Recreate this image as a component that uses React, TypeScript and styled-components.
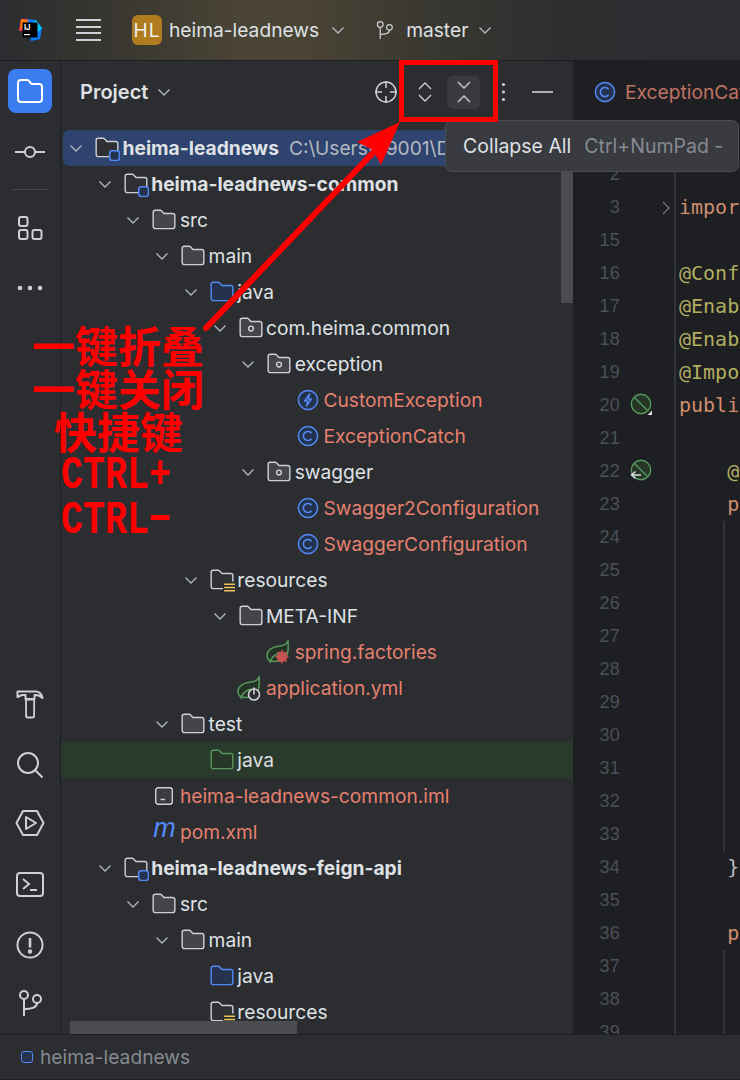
import React from "react";
import styled, { createGlobalStyle } from "styled-components";

const Global = createGlobalStyle`
  html, body { margin: 0; padding: 0; background: #2b2d30; }
  body { font-family: Inter, "Noto Sans", sans-serif; overflow: hidden; }
  #root { width: 740px; height: 1080px; }
`;

const Page = styled.div`
  position: relative; width: 740px; height: 1080px; overflow: hidden;
  display: flex; flex-direction: column; background: #2b2d30; color: #dfe1e5;
`;
const Header = styled.header`
  height: 60px; flex: none; display: flex; align-items: center; padding-left: 18px;
  border-bottom: 1px solid #1e1f22;
  background: linear-gradient(90deg, #2b2d30 0px, #35342f 90px, #4b4536 250px, #4a4435 300px, #3a3831 420px, #2d2e30 560px, #2b2d30 740px);
`;
const Logo = styled.div`
  width: 24px; height: 24px; flex: none; display: flex;
`;
const Burger = styled.div`
  margin-left: 34px; width: 25px; height: 24px; flex: none;
  display: flex; flex-direction: column; justify-content: space-between; padding: 1px 0; box-sizing: border-box;
  span { display: block; height: 2px; background: #ced0d6; }
`;
const Badge = styled.div`
  margin-left: 31px; width: 30px; height: 30px; border-radius: 6px; background: #ae7c1e; flex: none;
  display: flex; align-items: center; justify-content: center; color: #f2f2f0; font-size: 19px; letter-spacing: 1px;
`;
const HeadLabel = styled.span<{ $gap: number }>`
  margin-left: ${p => p.$gap}px; font-size: 19.2px; color: #dfe1e5; white-space: nowrap;
`;
const HeadChevron = styled.div<{ $gap: number }>`
  margin-left: ${p => p.$gap}px; display: flex; flex: none;
`;
const Main = styled.div`
  flex: 1; min-height: 0; display: flex;
`;
const Stripe = styled.aside`
  width: 60px; flex: none; border-right: 1px solid #1e1f22; display: flex; flex-direction: column;
  align-items: center; padding-top: 8px; box-sizing: content-box;
`;
const StripeActive = styled.div`
  width: 44px; height: 44px; border-radius: 8px; background: #3b7df0; display: flex; align-items: center; justify-content: center;
`;
const StripeIcon = styled.div<{ $top: number }>`
  margin-top: ${p => p.$top}px; display: flex; flex: none;
`;
const StripeRule = styled.div`
  width: 36px; height: 1px; background: #43454a; margin-top: 29px; flex: none;
`;
const StripeSpacer = styled.div`flex: 1;`;
const StripeFoot = styled.div`height: 18px; flex: none;`;
const Panel = styled.section`
  width: 512px; flex: none; position: relative; overflow: hidden; display: flex; flex-direction: column;
`;
const PanelHead = styled.div`
  height: 69px; flex: none; box-sizing: border-box; padding: 0 15px 7px 19px; display: flex; align-items: center;
`;
const PanelTitle = styled.span`
  font-size: 20px; font-weight: 600; color: #dfe1e5;
`;
const PanelIcon = styled.div<{ $left: number; $active?: boolean }>`
  margin-left: ${p => p.$left}px; width: 33px; height: 33px; flex: none; border-radius: 6px;
  display: flex; align-items: center; justify-content: center;
  background: ${p => (p.$active ? "#393b40" : "transparent")};
`;
const Tree = styled.div`
  display: flex; flex-direction: column;
`;
const Row = styled.div<{ $level: number; $tone?: string }>`
  height: 36px; flex: none; display: flex; align-items: center; white-space: nowrap; overflow: hidden;
  padding-left: ${p => 6 + p.$level * 28.7}px;
  ${p => p.$tone === "selected" ? "background:#2e436e;border-radius:6px;margin-left:2px;padding-left:4px;" : ""}
  ${p => p.$tone === "green" ? "background:#2a3a2c;" : ""}
`;
const ChevronSlot = styled.div`
  width: 29px; flex: none; display: flex; padding-left: 1px; box-sizing: border-box;
`;
const IconSlot = styled.div`
  width: 22px; height: 22px; flex: none; display: flex; align-items: center; justify-content: center; margin-right: 4.5px; position: relative;
  svg { flex: none; }
`;
const Label = styled.span<{ $red?: boolean; $bold?: boolean }>`
  font-size: 19.2px; font-weight: ${p => (p.$bold ? 700 : 400)};
  color: ${p => (p.$red ? "#e5806f" : "#dfe1e5")};
`;
const Hint = styled.span`
  font-size: 19.2px; color: #b5b9c0; margin-left: 10px;
`;
const Maven = styled.span`
  font: italic 400 27px "Liberation Sans", sans-serif; color: #548af7; line-height: 1; margin-top: -7px;
`;
const VScroll = styled.div`
  position: absolute; right: 0; top: 104px; width: 12px; height: 138px; background: #4a4c50;
`;
const HScroll = styled.div`
  position: absolute; left: 9px; bottom: 0; width: 227px; height: 13px; background: #4a4c50;
`;
const Editor = styled.section`
  flex: 1; min-width: 0; background: #1e1f22; display: flex; flex-direction: column; overflow: hidden;
`;
const TabBar = styled.div`
  height: 63.5px; flex: none; display: flex; align-items: flex-start; padding: 20px 0 0 21px; box-sizing: border-box;
  svg { flex: none; }
`;
const TabLabel = styled.span`
  margin-left: 9px; font-size: 19.2px; color: #c07264; white-space: nowrap; line-height: 22px; flex: none;
`;
const CodeArea = styled.div`
  flex: 1; min-height: 0; overflow: hidden; display: flex; flex-direction: column;
`;
const Line = styled.div`
  height: 33px; flex: none; display: flex; align-items: stretch;
`;
const Num = styled.div`
  width: 47px; flex: none; text-align: right; font: 18px/33px "Liberation Sans", sans-serif; letter-spacing: 0.2px; color: #4b5059;
`;
const Gutter = styled.div`
  width: 54px; flex: none; display: flex; align-items: center; position: relative; padding-left: 10px; box-sizing: border-box;
`;
const GutterFold = styled.div`
  position: absolute; right: 3px; top: 9px; display: flex;
`;
const GutterRule = styled.div`
  width: 2px; flex: none; background: #313438;
`;
const Code = styled.div<{ $guide?: boolean }>`
  flex: 1; min-width: 0; white-space: pre; overflow: hidden; padding-left: 3px;
  font: 20px/33px "DejaVu Sans Mono", "Liberation Mono", monospace;
  color: #bcbec4;
  ${p => p.$guide ? "background: linear-gradient(#313438,#313438) no-repeat 47px 0 / 2px 100%;" : ""}
`;
const Kw = styled.span`color: #cf8e6d;`;
const Ann = styled.span`color: #b3ae60;`;
const Status = styled.footer`
  height: 46px; flex: none; box-sizing: border-box; border-top: 1px solid #1e1f22; border-bottom: 1px solid #1e1f22;
  display: flex; align-items: center; padding-left: 21px; gap: 7px; font-size: 19.2px; color: #868a91; background: #2b2d30;
`;
const StatusDot = styled.span`
  width: 10px; height: 10px; border: 1.5px solid #548af7; border-radius: 3px; flex: none; background: #25324d;
`;
const Tooltip = styled.div`
  position: absolute; left: 445px; top: 120px; width: 294px; height: 52px; box-sizing: border-box;
  background: #393b40; border: 1.5px solid #4a4c51; border-radius: 7px;
  display: flex; align-items: center; padding: 0 0 0 17px; white-space: nowrap; font-size: 19.5px; color: #dfe1e5;
`;
const TooltipKey = styled.span`
  margin-left: 13px; color: #868a91; font-size: 19.5px;
`;
const RedBox = styled.div`
  position: absolute; left: 399px; top: 60px; width: 99px; height: 62px; box-sizing: border-box; border: 5px solid #ff0000;
`;
const Arrow = styled.svg`
  position: absolute; left: 0; top: 0; pointer-events: none;
`;
const Note = styled.div`
  position: absolute; left: 0; top: 323px; display: flex; flex-direction: column; color: #ff0000;
`;
const NoteCjk = styled.div<{ $left: number }>`
  padding-left: ${p => p.$left}px; height: 43px; font: 700 43px/43px "Noto Sans CJK SC", "Liberation Sans", sans-serif; white-space: nowrap;
`;
const NoteLatin = styled.div`
  padding-left: 61px; height: 44px; margin-top: 1px; font: 700 36.7px/44px "Liberation Mono", monospace; white-space: nowrap;
  transform: scaleY(1.25); transform-origin: 0 50%;
`;

const stroke = "#ced0d6";

type FK = "plain" | "blue" | "green" | "module" | "package" | "resources";

const Chevron = ({ c = "#b4b8bf", s = 16 }: { c?: string; s?: number }) => (
  <svg width={s} height={s} viewBox="0 0 16 16" fill="none"><path d="M2.5 5.5 8 11l5.5-5.5" stroke={c} strokeWidth="1.3" /></svg>
);

const Folder = ({ kind }: { kind: FK }) => {
  const fill = kind === "blue" ? "#25324d" : kind === "green" ? "#253627" : kind === "module" || kind === "resources" ? "#2f3135" : "#43454a";
  const line = kind === "blue" ? "#548af7" : kind === "green" ? "#57965c" : "#ced0d6";
  return (
    <svg width="26" height="26" viewBox="0 0 24 24" fill="none">
      <path d="M2 5a2 2 0 0 1 2-2h4.500a1.500 1.500 0 0 1 1.100.5L12 6h8a2 2 0 0 1 2 2v10a2 2 0 0 1-2 2H4a2 2 0 0 1-2-2z" fill={fill} stroke={line} strokeWidth="1.300" />
      {kind === "package" && <circle cx="12" cy="12.500" r="2.200" stroke={line} strokeWidth="1.300" />}
      {kind === "module" && <rect x="14.500" y="14.500" width="9" height="9" rx="2.400" fill="#25324d" stroke="#548af7" strokeWidth="1.400" />}
      {kind === "resources" && (
        <g>
          <rect x="13" y="13.500" width="11" height="10" fill="#2b2d30" />
          <path d="M14 16h10M14 19h10M14 22h10" stroke="#f2c55c" strokeWidth="1.400" />
        </g>
      )}
    </svg>
  );
};

const ClassIcon = ({ bolt }: { bolt?: boolean }) => (
  <svg width="22" height="22" viewBox="0 0 22 22" fill="none">
    <circle cx="11" cy="11" r="9.600" fill="#25324d" stroke="#548af7" strokeWidth="1.500" />
    {bolt
      ? <path d="M12.600 5 7.600 12h3.200l-1.400 5 5-7h-3.200z" stroke="#548af7" strokeWidth="1.400" strokeLinejoin="round" />
      : <path d="M14.600 8.200A4.600 4.600 0 1 0 14.600 13.800" stroke="#548af7" strokeWidth="1.500" />}
  </svg>
);

const Leaf = ({ badge }: { badge: "star" | "power" }) => (
  <svg width="27" height="27" viewBox="0 0 27 27" fill="none" style={{ marginLeft: -2 }}>
    <path d="M23 1.500c-.5 3.500-3 5-8 5.500C8 7.800 2 11 2 16.500 2 20.500 5 22.500 9.500 22.500c5 0 10.500-1 12.500-6.500 1-3 1.500-9 1-14.500z" fill="#233326" stroke="#57965c" strokeWidth="1.600" strokeLinejoin="round" />
    <path d="M5 24c.5-5 4.500-8.500 10-10" stroke="#57965c" strokeWidth="1.500" />
    {badge === "star"
      ? <path d="M17 10.500l1.800 3 3.200-1-.7 3.300 2.700 2-2.700 2 .7 3.300-3.200-1-1.800 3-1.800-3-3.200 1 .7-3.300-2.700-2 2.700-2-.7-3.300 3.200 1z" fill="#c75450" />
      : <g stroke="#ced0d6" strokeWidth="1.600"><circle cx="18" cy="19.500" r="5.500" fill="#2b2d30" /><path d="M18 12.500V19.500" /></g>}
  </svg>
);

const Iml = () => (
  <svg width="20" height="20" viewBox="0 0 20 20" fill="none">
    <rect x="1.700" y="1.700" width="16.600" height="16.600" rx="2.500" fill="#393b40" stroke="#ced0d6" strokeWidth="1.400" />
    <path d="M6.500 13.500h4.500" stroke="#ced0d6" strokeWidth="1.500" />
  </svg>
);

const StripeFolder = () => (
  <svg width="30" height="30" viewBox="0 0 30 30" fill="none">
    <path d="M3 7a3 3 0 0 1 3-3h6.200a2 2 0 0 1 1.500.7L16.500 8H24a3 3 0 0 1 3 3v12a3 3 0 0 1-3 3H6a3 3 0 0 1-3-3z" stroke="#fff" strokeWidth="2" />
  </svg>
);
const CommitIcon = () => (
  <svg width="30" height="16" viewBox="0 0 30 16" fill="none" stroke={stroke} strokeWidth="2">
    <circle cx="15" cy="8" r="5" /><path d="M0 8h10M20 8h10" />
  </svg>
);
const StructIcon = () => (
  <svg width="26" height="24" viewBox="0 0 26 24" fill="none" stroke={stroke} strokeWidth="2">
    <rect x="2" y="1" width="8.500" height="9" rx="2" /><rect x="2" y="14" width="8.500" height="9" rx="2" /><rect x="15.500" y="14" width="9" height="9" rx="2" />
  </svg>
);
const DotsIcon = () => (
  <svg width="26" height="6" viewBox="0 0 26 6" fill={stroke}>
    <circle cx="3" cy="3" r="2.300" /><circle cx="13" cy="3" r="2.300" /><circle cx="23" cy="3" r="2.300" />
  </svg>
);
const HammerIcon = () => (
  <svg width="28" height="30" viewBox="0 0 28 30" fill="none" stroke={stroke} strokeWidth="2" strokeLinejoin="round">
    <path d="M1.500 2.500h18c3.500 0 6 2 7 6.500-2-2-4-3-7-3h-1v4h-9v-4H6L1.500 8z" />
    <path d="M9.500 10.500h9v16a2 2 0 0 1-2 2h-5a2 2 0 0 1-2-2z" transform="translate(1.500 0) scale(.9 1)" />
  </svg>
);
const SearchIcon = () => (
  <svg width="28" height="28" viewBox="0 0 28 28" fill="none" stroke={stroke} strokeWidth="2">
    <circle cx="12" cy="12" r="10" /><path d="M19.500 19.500l7 7" />
  </svg>
);
const RunIcon = () => (
  <svg width="30" height="28" viewBox="0 0 30 28" fill="none" stroke={stroke} strokeWidth="2" strokeLinejoin="round">
    <path d="M8 2h14l6.500 12L22 26H8L1.500 14z" /><path d="M11 8l10 6-10 6z" />
  </svg>
);
const TermIcon = () => (
  <svg width="28" height="26" viewBox="0 0 28 26" fill="none" stroke={stroke} strokeWidth="2">
    <rect x="1" y="1" width="26" height="23" rx="3" /><path d="M7 7l6 5-6 5M14 18h7" />
  </svg>
);
const AlertIcon = () => (
  <svg width="28" height="28" viewBox="0 0 28 28" fill="none" stroke={stroke} strokeWidth="2">
    <circle cx="14" cy="14" r="12.500" /><path d="M14 7v9.500" strokeWidth="2.600" /><circle cx="14" cy="20.500" r="1.200" fill={stroke} />
  </svg>
);
const GitIcon = ({ s = 24, c = stroke, w = 2 }: { s?: number; c?: string; w?: number }) => (
  <svg width={s} height={s * 1.1} viewBox="0 0 24 26.400" fill="none" stroke={c} strokeWidth={w}>
    <circle cx="6" cy="5" r="4" /><circle cx="19" cy="9" r="4" /><path d="M6 9v17M6 19c6 0 13-1 13-6" />
  </svg>
);
const TargetIcon = () => (
  <svg width="24" height="24" viewBox="0 0 24 24" fill="none" stroke={stroke} strokeWidth="1.500">
    <circle cx="12" cy="12" r="10" /><path d="M12 1v7M12 16v7M1 12h7M16 12h7" />
  </svg>
);
const ExpandIcon = () => (
  <svg width="16" height="22" viewBox="0 0 16 22" fill="none" stroke={stroke} strokeWidth="1.300">
    <path d="M2 8l6-6 6 6M2 14l6 6 6-6" />
  </svg>
);
const CollapseIcon = () => (
  <svg width="16" height="24" viewBox="0 0 16 24" fill="none" stroke={stroke} strokeWidth="1.300">
    <path d="M2 2l6 6 6-6M2 22l6-6 6 6" />
  </svg>
);
const KebabIcon = () => (
  <svg width="5" height="22" viewBox="0 0 5 22" fill={stroke}>
    <circle cx="2.500" cy="3.500" r="1.600" /><circle cx="2.500" cy="11" r="1.600" /><circle cx="2.500" cy="18.500" r="1.600" />
  </svg>
);
const MinusIcon = () => (
  <svg width="21" height="4" viewBox="0 0 21 4"><path d="M0 2h21" stroke={stroke} strokeWidth="1.600" /></svg>
);
const RunGutter = ({ extra }: { extra: "tri" | "back" }) => (
  <svg width="24" height="24" viewBox="0 0 24 24" fill="none">
    <circle cx="11" cy="11" r="9.700" fill="#253627" stroke="#57965c" strokeWidth="1.400" />
    <path d="M4.500 4.500l13 13" stroke="#57965c" strokeWidth="1.400" />
    {extra === "tri"
      ? <path d="M22 17.500v4.500h-4.500z" fill="#dfe1e5" />
      : <path d="M11 16H1.500M5.500 12.500 1.500 16l4 3.500" stroke="#dfe1e5" strokeWidth="1.400" />}
  </svg>
);
const FoldChevron = () => (
  <svg width="10" height="16" viewBox="0 0 10 16" fill="none"><path d="M2 2l6 6-6 6" stroke="#6f737a" strokeWidth="1.300" /></svg>
);
const IjLogo = () => (
  <svg width="24" height="24" viewBox="0 0 24 24">
    <path d="M3 1h9l-3 12H1z" fill="#fe315d" />
    <path d="M9 1l9 1 6 8-2 11-9 2z" fill="#087cfa" />
    <path d="M18 2l6 8-4 4-7-8z" fill="#07c3f2" />
    <path d="M3 1l7 1-1 8-7 1z" fill="#f97a12" />
    <rect x="4.500" y="4.500" width="15" height="15" fill="#000" />
    <text x="6" y="12" fontSize="7.500" fontWeight="700" fontFamily="Inter, sans-serif" fill="#fff">IJ</text>
    <rect x="6" y="16" width="6" height="1.200" fill="#fff" />
  </svg>
);

type RowData = {
  level: number; label: string; chevron?: boolean; icon: React.ReactNode;
  red?: boolean; bold?: boolean; tone?: string; hint?: string;
};
const F = (k: FK) => <Folder kind={k} />;
const rows: RowData[] = [
  { level: 0, label: "heima-leadnews", chevron: true, icon: F("module"), bold: true, tone: "selected", hint: "C:\\Users\\29001\\Desktop\\heima-leadnews" },
  { level: 1, label: "heima-leadnews-common", chevron: true, icon: F("module"), bold: true },
  { level: 2, label: "src", chevron: true, icon: F("plain") },
  { level: 3, label: "main", chevron: true, icon: F("plain") },
  { level: 4, label: "java", chevron: true, icon: F("blue") },
  { level: 5, label: "com.heima.common", chevron: true, icon: F("package") },
  { level: 6, label: "exception", chevron: true, icon: F("package") },
  { level: 7, label: "CustomException", icon: <ClassIcon bolt />, red: true },
  { level: 7, label: "ExceptionCatch", icon: <ClassIcon />, red: true },
  { level: 6, label: "swagger", chevron: true, icon: F("package") },
  { level: 7, label: "Swagger2Configuration", icon: <ClassIcon />, red: true },
  { level: 7, label: "SwaggerConfiguration", icon: <ClassIcon />, red: true },
  { level: 4, label: "resources", chevron: true, icon: F("resources") },
  { level: 5, label: "META-INF", chevron: true, icon: F("plain") },
  { level: 6, label: "spring.factories", icon: <Leaf badge="star" />, red: true },
  { level: 5, label: "application.yml", icon: <Leaf badge="power" />, red: true },
  { level: 3, label: "test", chevron: true, icon: F("plain") },
  { level: 4, label: "java", icon: F("green"), tone: "green" },
  { level: 2, label: "heima-leadnews-common.iml", icon: <Iml />, red: true },
  { level: 2, label: "pom.xml", icon: <Maven>m</Maven>, red: true },
  { level: 1, label: "heima-leadnews-feign-api", chevron: true, icon: F("module"), bold: true },
  { level: 2, label: "src", chevron: true, icon: F("plain") },
  { level: 3, label: "main", chevron: true, icon: F("plain") },
  { level: 4, label: "java", icon: F("blue") },
  { level: 4, label: "resources", icon: F("resources") },
];

const nums = [1, 2, 3, ...Array.from({ length: 25 }, (_, i) => i + 15)];
const guided = (n: number) => (n >= 24 && n <= 33) || n >= 37;

const codeFor = (n: number): React.ReactNode => {
  switch (n) {
    case 3: return <Kw>import ...</Kw>;
    case 16: return <Ann>@Configuration</Ann>;
    case 17: return <Ann>@EnableSwagger2</Ann>;
    case 18: return <Ann>@EnableKnife4j</Ann>;
    case 19: return <Ann>@Import(Bean)</Ann>;
    case 20: return <Kw>public class</Kw>;
    case 22: return <>    <Ann>@Bean</Ann></>;
    case 23: return <>    <Kw>public</Kw></>;
    case 34: return <>    {"}"}</>;
    case 36: return <>    <Kw>private</Kw></>;
    default: return " ";
  }
};

export default function App() {
  return (
    <Page>
      <Global />
      <Header>
        <Logo><IjLogo /></Logo>
        <Burger><span /><span /><span /><span /></Burger>
        <Badge>HL</Badge>
        <HeadLabel $gap={7}>heima-leadnews</HeadLabel>
        <HeadChevron $gap={11}><Chevron s={16} /></HeadChevron>
        <HeadChevron $gap={30}><GitIcon s={17} w={1.700} /></HeadChevron>
        <HeadLabel $gap={13}>master</HeadLabel>
        <HeadChevron $gap={9}><Chevron s={16} /></HeadChevron>
      </Header>
      <Main>
        <Stripe>
          <StripeActive><StripeFolder /></StripeActive>
          <StripeIcon $top={31}><CommitIcon /></StripeIcon>
          <StripeRule />
          <StripeIcon $top={26}><StructIcon /></StripeIcon>
          <StripeIcon $top={45}><DotsIcon /></StripeIcon>
          <StripeSpacer />
          <StripeIcon $top={0}><HammerIcon /></StripeIcon>
          <StripeIcon $top={32}><SearchIcon /></StripeIcon>
          <StripeIcon $top={30}><RunIcon /></StripeIcon>
          <StripeIcon $top={35}><TermIcon /></StripeIcon>
          <StripeIcon $top={33}><AlertIcon /></StripeIcon>
          <StripeIcon $top={31}><GitIcon s={24} /></StripeIcon>
          <StripeFoot />
        </Stripe>
        <Panel>
          <PanelHead>
            <PanelTitle>Project</PanelTitle>
            <HeadChevron $gap={8}><Chevron s={16} /></HeadChevron>
            <PanelIcon $left={197}><TargetIcon /></PanelIcon>
            <PanelIcon $left={6}><ExpandIcon /></PanelIcon>
            <PanelIcon $left={6} $active><CollapseIcon /></PanelIcon>
            <PanelIcon $left={7}><KebabIcon /></PanelIcon>
            <PanelIcon $left={6}><MinusIcon /></PanelIcon>
          </PanelHead>
          <Tree>
            {rows.map((r, i) => (
              <Row key={i} $level={r.level} $tone={r.tone}>
                <ChevronSlot>{r.chevron && <Chevron />}</ChevronSlot>
                <IconSlot>{r.icon}</IconSlot>
                <Label $red={r.red} $bold={r.bold}>{r.label}</Label>
                {r.hint && <Hint>{r.hint}</Hint>}
              </Row>
            ))}
          </Tree>
          <VScroll />
          <HScroll />
        </Panel>
        <Editor>
          <TabBar>
            <ClassIcon />
            <TabLabel>ExceptionCatch</TabLabel>
          </TabBar>
          <CodeArea>
            {nums.map(n => (
              <Line key={n}>
                <Num>{n}</Num>
                <Gutter>
                  {n === 20 && <RunGutter extra="tri" />}
                  {n === 22 && <RunGutter extra="back" />}
                  {n === 3 && <GutterFold><FoldChevron /></GutterFold>}
                </Gutter>
                <GutterRule />
                <Code $guide={guided(n)}>{codeFor(n)}</Code>
              </Line>
            ))}
          </CodeArea>
        </Editor>
      </Main>
      <Status><StatusDot />heima-leadnews</Status>
      <Tooltip>Collapse All<TooltipKey>Ctrl+NumPad -</TooltipKey></Tooltip>
      <RedBox />
      <Arrow width="740" height="1080" viewBox="0 0 740 1080">
        <path d="M206 328 388 137" stroke="#ff0000" strokeWidth="6" strokeLinecap="round" />
        <path d="M400 122 357 142 373 150 381 165z" fill="#ff0000" />
      </Arrow>
      <Note>
        <NoteCjk $left={32}>一键折叠</NoteCjk>
        <NoteCjk $left={32}>一键关闭</NoteCjk>
        <NoteCjk $left={54}>快捷键</NoteCjk>
        <NoteLatin>CTRL+</NoteLatin>
        <NoteLatin>CTRL−</NoteLatin>
      </Note>
    </Page>
  );
}
